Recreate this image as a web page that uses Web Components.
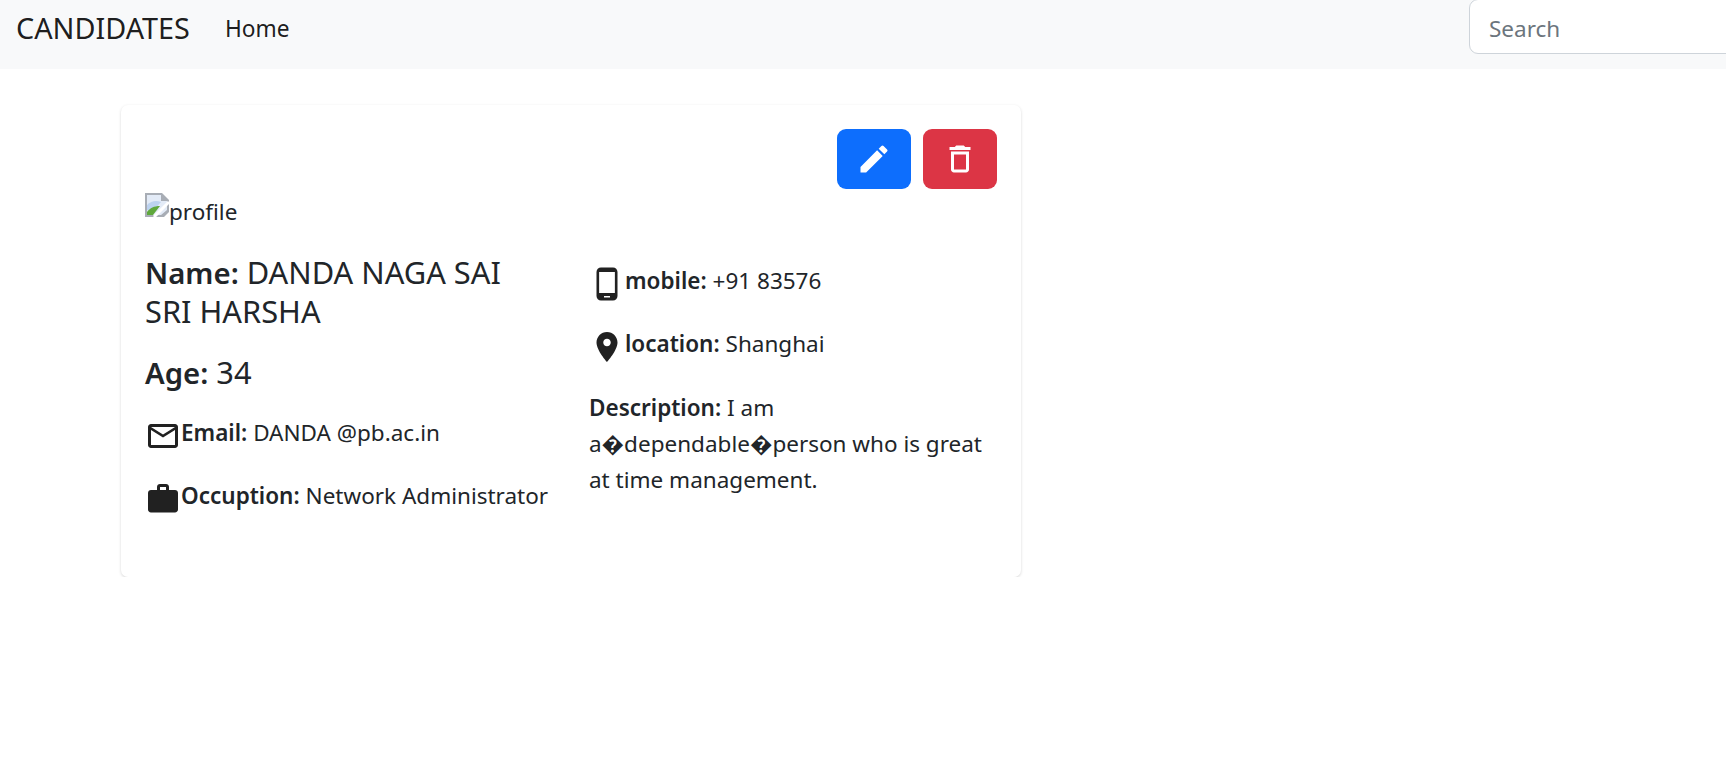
<!DOCTYPE html>
<html lang="en">
<head>
<meta charset="utf-8">
<title>Candidates</title>
<style>
    html, body { margin: 0; background: #fff; overflow: hidden; }
    body {
        font-family: "Noto Sans", "Open Sans", sans-serif;
        color: #212529;
        font-size: 22.5px;
        line-height: 36px;
    }
</style>
</head>
<body>
<app-navbar brand="CANDIDATES">
    <a slot="links" href="#">Home</a>
</app-navbar>
<main-page>
    <candidate-card>
        <action-button slot="actions" color="#0d6efd" icon="edit"></action-button>
        <action-button slot="actions" color="#dc3545" icon="delete"></action-button>
        <broken-image slot="photo" alt="profile"></broken-image>

        <div slot="left">
            <head-line label="Name:">DANDA NAGA SAI SRI HARSHA</head-line>
            <head-line label="Age:">34</head-line>
            <info-row icon="mail" label="Email:">DANDA @pb.ac.in</info-row>
            <info-row icon="work" label="Occuption:">Network Administrator</info-row>
        </div>
        <div slot="right" style="padding-top: 10px">
            <info-row icon="phone" label="mobile:">+91 83576</info-row>
            <info-row icon="place" label="location:">Shanghai</info-row>
            <info-row label="Description:">I am a�dependable�person who is great at time management.</info-row>
        </div>
    </candidate-card>
</main-page>

<script>
const ICONS = {
    edit: 'M3 17.25V21h3.75L17.81 9.94l-3.75-3.75L3 17.25zM20.71 7.04a.996.996 0 0 0 0-1.41l-2.34-2.34a.996.996 0 0 0-1.41 0l-1.83 1.83 3.75 3.75 1.83-1.83z',
    delete: 'M6 19c0 1.1.9 2 2 2h8c1.1 0 2-.9 2-2V7H6v12zM8 9h8v10H8V9zm7.5-5l-1-1h-5l-1 1H5v2h14V4z',
    mail: 'M20 4H4c-1.1 0-1.99.9-1.99 2L2 18c0 1.1.9 2 2 2h16c1.1 0 2-.9 2-2V6c0-1.1-.9-2-2-2zm0 14H4V8l8 5 8-5v10zm-8-7L4 6h16l-8 5z',
    work: 'M20 6h-4V4c0-1.11-.89-2-2-2h-4c-1.11 0-2 .89-2 2v2H4c-1.11 0-1.99.89-1.99 2L2 19c0 1.11.89 2 2 2h16c1.11 0 2-.89 2-2V8c0-1.11-.89-2-2-2zm-6 0h-4V4h4v2z',
    phone: 'M16 1H8C6.34 1 5 2.34 5 4v16c0 1.66 1.34 3 3 3h8c1.66 0 3-1.34 3-3V4c0-1.66-1.34-3-3-3zm-2 20h-4v-1h4v1zm3.25-3H6.75V4h10.5v14z',
    place: 'M12 2C8.13 2 5 5.13 5 9c0 5.25 7 13 7 13s7-7.75 7-13c0-3.87-3.13-7-7-7zm0 9.5c-1.38 0-2.5-1.12-2.5-2.5s1.12-2.5 2.5-2.5 2.5 1.12 2.5 2.5-1.12 2.5-2.5 2.5z'
};

function iconSvg(name, size) {
    return `<svg width="${size}" height="${size}" viewBox="0 0 24 24" fill="currentColor" aria-hidden="true"><path d="${ICONS[name]}"/></svg>`;
}

class AppNavbar extends HTMLElement {
    constructor() {
        super();
        this.attachShadow({ mode: 'open' });
    }

    connectedCallback() {
        this.shadowRoot.innerHTML = `
            <style>
                :host {
                    display: flex;
                    align-items: flex-start;
                    height: 69px;
                    background: #f8f9fa;
                    padding-left: 16px;
                    box-sizing: border-box;
                    overflow: hidden;
                }
                .brand {
                    font-size: 28.8px;
                    line-height: 56px;
                    color: rgba(0, 0, 0, .9);
                    margin-right: 35px;
                }
                ::slotted(a) {
                    font-size: 22.7px;
                    line-height: 57px;
                    color: rgba(0, 0, 0, .9);
                    text-decoration: none;
                }
                input {
                    margin-left: auto;
                    margin-top: -1px;
                    margin-right: -60px;
                    width: 317px;
                    height: 55px;
                    box-sizing: border-box;
                    border: 1px solid #ced4da;
                    border-radius: 9px;
                    padding: 4px 18px 0 19px;
                    font: inherit;
                    font-size: 22.5px;
                    background: #fff;
                }
                input::placeholder { color: #6c757d; opacity: 1; }
            </style>
            <span class="brand">${this.getAttribute('brand')}</span>
            <slot name="links"></slot>
            <input type="search" placeholder="Search">
        `;
    }
}

class MainPage extends HTMLElement {
    constructor() {
        super();
        this.attachShadow({ mode: 'open' });
        this.shadowRoot.innerHTML = `
            <style>
                :host { display: block; padding: 36px 0 0 121px; }
            </style>
            <slot></slot>
        `;
    }
}

class CandidateCard extends HTMLElement {
    constructor() {
        super();
        this.attachShadow({ mode: 'open' });
        this.shadowRoot.innerHTML = `
            <style>
                :host {
                    display: block;
                    width: 900px;
                    height: 472px;
                    box-sizing: border-box;
                    padding: 24px 24px 0;
                    border-radius: 7px;
                    box-shadow: 0 1px 3px rgba(0, 0, 0, .16);
                }
                .actions {
                    display: flex;
                    justify-content: flex-end;
                    gap: 12px;
                }
                .columns {
                    display: grid;
                    grid-template-columns: 444px 1fr;
                    margin-top: 25px;
                }
                .photo { height: 36px; margin-top: 3px; }
            </style>
            <div class="actions"><slot name="actions"></slot></div>
            <div class="photo"><slot name="photo"></slot></div>
            <div class="columns">
                <slot name="left"></slot>
                <slot name="right"></slot>
            </div>
        `;
    }
}

class ActionButton extends HTMLElement {
    constructor() {
        super();
        this.attachShadow({ mode: 'open' });
    }

    connectedCallback() {
        this.shadowRoot.innerHTML = `
            <style>
                :host {
                    display: flex;
                    align-items: center;
                    justify-content: center;
                    width: 74px;
                    height: 60px;
                    border-radius: 9px;
                    color: #fff;
                    background: ${this.getAttribute('color')};
                }
                svg { display: block; }
            </style>
            ${iconSvg(this.getAttribute('icon'), 36)}
        `;
    }
}

class BrokenImage extends HTMLElement {
    constructor() {
        super();
        this.attachShadow({ mode: 'open' });
    }

    connectedCallback() {
        this.shadowRoot.innerHTML = `
            <style>
                :host { display: flex; align-items: flex-start; white-space: nowrap; line-height: 36px; }
                svg { flex: none; margin-top: 1px; }
                span { margin-top: 2px; font-size: 22.5px; }
            </style>
            <svg width="24" height="24" viewBox="0 0 24 24" aria-hidden="true">
                <path d="M0 0h17l7 7v12l-5 5H0z" fill="#a8adb5"/>
                <path d="M2 2h14v6h6v9l-6 5H2z" fill="#e3ebf7"/>
                <path d="M2 12c4-4 9-5 14-3l-7 8H2z" fill="#bcd2ef"/>
                <path d="M2 22v-3c3-4 7-6 13-6l-7 9z" fill="#5fa83c"/>
                <path d="M9 24l15-15" stroke="#fff" stroke-width="3"/>
            </svg><span>${this.getAttribute('alt')}</span>
        `;
    }
}

class HeadLine extends HTMLElement {
    constructor() {
        super();
        this.attachShadow({ mode: 'open' });
    }

    connectedCallback() {
        this.shadowRoot.innerHTML = `
            <style>
                :host {
                    display: block;
                    width: 370px;
                    font-size: 30.8px;
                    line-height: 38px;
                    margin-bottom: 23px;
                }
                b { font-weight: 600; font-size: 29.3px; }
            </style>
            <b>${this.getAttribute('label')}</b> <slot></slot>
        `;
    }
}

class InfoRow extends HTMLElement {
    constructor() {
        super();
        this.attachShadow({ mode: 'open' });
    }

    connectedCallback() {
        const icon = this.getAttribute('icon');
        this.shadowRoot.innerHTML = `
            <style>
                :host {
                    display: block;
                    margin-bottom: 24.5px;
                }
                svg { vertical-align: middle; margin-top: 2px; color: #212121; }
                b { font-weight: 600; }
            </style>
            ${icon ? iconSvg(icon, 36) : ''}<b>${this.getAttribute('label')}</b> <slot></slot>
        `;
    }
}

customElements.define('app-navbar', AppNavbar);
customElements.define('main-page', MainPage);
customElements.define('candidate-card', CandidateCard);
customElements.define('action-button', ActionButton);
customElements.define('broken-image', BrokenImage);
customElements.define('head-line', HeadLine);
customElements.define('info-row', InfoRow);
</script>
</body>
</html>
